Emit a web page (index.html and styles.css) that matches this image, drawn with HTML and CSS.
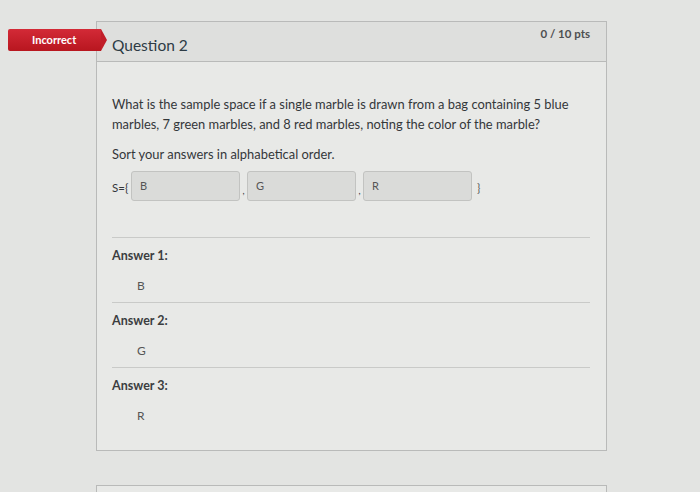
FILE: index.html
```html
<!DOCTYPE html>
<html>
<head>
<meta charset="utf-8">
<link rel="stylesheet" href="styles.css">
</head>
<body>
<div class="page">
  <div class="question">
    <div class="badge">Incorrect</div>
    <div class="card">
      <div class="header">
        <div class="title">Question 2</div>
        <div class="pts">0 / 10 pts</div>
      </div>
      <div class="body">
        <p class="text">What is the sample space if a single marble is drawn from a bag containing 5 blue marbles, 7 green marbles, and 8 red marbles, noting the color of the marble?</p>
        <p class="text">Sort your answers in alphabetical order.</p>
        <div class="setrow">
          <span class="lbl">S={</span>
          <span class="inp">B</span>
          <span class="sep">,</span>
          <span class="inp">G</span>
          <span class="sep">,</span>
          <span class="inp">R</span>
          <span class="close">}</span>
        </div>
        <div class="answers">
          <div class="ans">
            <div class="ans-title">Answer 1:</div>
            <div class="ans-val">B</div>
          </div>
          <div class="ans">
            <div class="ans-title">Answer 2:</div>
            <div class="ans-val">G</div>
          </div>
          <div class="ans last">
            <div class="ans-title">Answer 3:</div>
            <div class="ans-val">R</div>
          </div>
        </div>
      </div>
    </div>
  </div>
  <div class="card next"></div>
</div>
</body>
</html>
```
FILE: styles.css
```css
html, body {
  margin: 0;
  padding: 0;
}
body {
  background: #e3e4e2;
  font-family: Lato, "Liberation Sans", sans-serif;
  color: #34373a;
  width: 700px;
  height: 492px;
  overflow: hidden;
}
.page {
  padding: 21px 93px 0 96px;
  display: flex;
  flex-direction: column;
  gap: 34px;
}
.question {
  position: relative;
}
.badge {
  position: absolute;
  left: -88px;
  top: 8px;
  width: 93px;
  height: 22px;
  background: linear-gradient(#d32a37, #b8161f);
  color: #fff;
  font-weight: bold;
  font-size: 11px;
  line-height: 22px;
  padding-left: 24px;
  box-sizing: border-box;
  border-radius: 2px 0 0 2px;
}
.badge::after {
  content: "";
  position: absolute;
  right: -6px;
  top: 0;
  border-left: 6px solid #c11e29;
  border-top: 11px solid transparent;
  border-bottom: 11px solid transparent;
}
.card {
  border: 1px solid #b9bab9;
  background: #e8e9e7;
}
.header {
  background: #dedfdd;
  border-bottom: 1px solid #b9bab9;
  height: 39px;
  display: flex;
  justify-content: space-between;
  padding: 0 16px 0 15px;
}
.title {
  font-size: 15.5px;
  padding-top: 14px;
  color: #2d3b45;
}
.pts {
  font-size: 11.5px;
  font-weight: bold;
  padding-top: 5px;
  color: #4d4f51;
}
.body {
  padding: 32px 16px 0 15px;
}
.text {
  margin: 0;
  font-size: 12.9px;
  line-height: 20px;
}
.text + .text {
  margin-top: 10px;
}
.setrow {
  display: flex;
  align-items: flex-start;
  margin-top: 7px;
  font-size: 11px;
  height: 30px;
}
.lbl {
  padding-top: 10px;
  width: 19px;
  font-size: 11.5px;
}
.inp {
  width: 109px;
  height: 30px;
  box-sizing: border-box;
  background: #dadbd9;
  border: 1px solid #c2c3c1;
  border-radius: 3px;
  padding: 7px 0 0 8px;
  color: #555;
}
.sep {
  width: 7px;
  padding-top: 14px;
  font-size: 9px;
  text-align: center;
}
.close {
  padding: 10px 0 0 5px;
  color: #555;
}
.answers {
  margin-top: 36px;
}
.ans {
  border-top: 1px solid #c9cac8;
  padding-top: 10px;
  height: 54px;
}
.ans.last {
  height: 72px;
}
.ans-title {
  font-size: 12.5px;
  font-weight: bold;
  color: #3b3d3f;
  line-height: 16px;
}
.ans-val {
  margin: 14px 0 0 25px;
  font-size: 12px;
  color: #555;
}
.next {
  height: 20px;
  border-bottom: none;
}
```
